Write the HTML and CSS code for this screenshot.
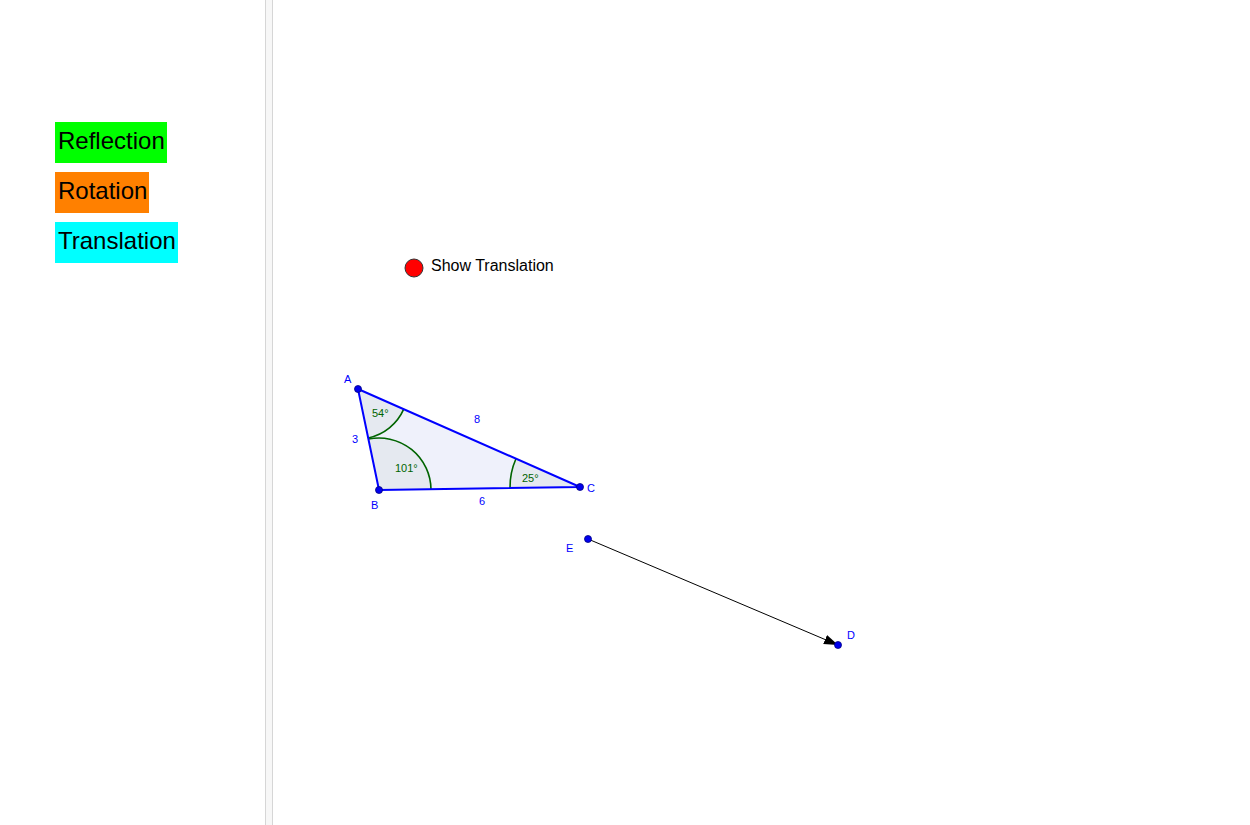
FILE: index.html
```html
<!DOCTYPE html>
<html>
<head>
<meta charset="utf-8">
<link rel="stylesheet" href="styles.css">
</head>
<body>
<div class="app">
  <div class="panel">
    <div class="btn btn-reflect">Reflection</div>
    <div class="btn btn-rotate">Rotation</div>
    <div class="btn btn-translate">Translation</div>
  </div>
  <div class="divider"></div>
  <div class="canvas">
    <svg class="board" width="977" height="825" viewBox="273 0 977 825" xmlns="http://www.w3.org/2000/svg">
      <defs>
        <marker id="arr" viewBox="0 0 10 10" refX="10" refY="5" markerWidth="14" markerHeight="14" markerUnits="userSpaceOnUse" orient="auto">
          <path d="M0,1.5 L10,5 L0,8.5 Z" fill="#000"/>
        </marker>
      </defs>
      <!-- checkbox -->
      <circle cx="414" cy="268" r="9" fill="#ff0000" stroke="#333" stroke-width="1"/>
      <text x="431" y="271" class="cb-label">Show Translation</text>

      <!-- triangle -->
      <polygon points="358,389 379,490 580,487" fill="#eff1fb" stroke="none"/>
      <!-- angle sectors -->
      <path d="M358,389 L368.18,437.95 A50,50 0 0 0 403.74,409.19 Z" fill="#e5e9f0"/>
      <path d="M379,490 L368.41,439.09 A52,52 0 0 1 430.99,489.22 Z" fill="#e5e9f0"/>
      <path d="M580,487 L510.01,488.04 A70,70 0 0 1 515.96,458.73 Z" fill="#e5e9f0"/>
      <path d="M368.18,437.95 A50,50 0 0 0 403.74,409.19" fill="none" stroke="#006400" stroke-width="1.6"/>
      <path d="M368.41,439.09 A52,52 0 0 1 430.99,489.22" fill="none" stroke="#006400" stroke-width="1.6"/>
      <path d="M510.01,488.04 A70,70 0 0 1 515.96,458.73" fill="none" stroke="#006400" stroke-width="1.6"/>
      <polygon points="358,389 379,490 580,487" fill="none" stroke="#0000ff" stroke-width="2" stroke-linejoin="round"/>

      <text x="372" y="417" class="ang">54°</text>
      <text x="395" y="472" class="ang">101°</text>
      <text x="522" y="482" class="ang">25°</text>

      <text x="352" y="443" class="lbl">3</text>
      <text x="474" y="423" class="lbl">8</text>
      <text x="479" y="505" class="lbl">6</text>

      <circle cx="358" cy="389" r="3.5" class="pt"/>
      <circle cx="379" cy="490" r="3.5" class="pt"/>
      <circle cx="580" cy="487" r="3.5" class="pt"/>
      <text x="344" y="383" class="lbl">A</text>
      <text x="371" y="509" class="lbl">B</text>
      <text x="587" y="492" class="lbl">C</text>

      <!-- vector -->
      <line x1="588" y1="539" x2="838" y2="645" stroke="#000" stroke-width="1" marker-end="url(#arr)"/>
      <circle cx="588" cy="539" r="3.5" class="pt"/>
      <circle cx="838" cy="645" r="3.5" class="pt"/>
      <text x="566" y="552" class="lbl">E</text>
      <text x="847" y="639" class="lbl">D</text>
    </svg>
  </div>
</div>
</body>
</html>
```

FILE: styles.css
```css
html, body {
  margin: 0;
  padding: 0;
  background: #ffffff;
  overflow: hidden;
}

.app {
  display: flex;
  width: 1250px;
  height: 825px;
  font-family: "Liberation Sans", Arial, sans-serif;
}

.panel {
  width: 210px;
  padding: 122px 0 0 55px;
  display: flex;
  flex-direction: column;
  align-items: flex-start;
  gap: 9px;
  background: #ffffff;
}

.btn {
  height: 41px;
  line-height: 38px;
  padding: 0 2px 0 3px;
  font-size: 24px;
  color: #000;
  box-sizing: border-box;
}

.btn-reflect { background: #00ff00; }
.btn-rotate { background: #ff8000; }
.btn-translate { background: #00ffff; }

.divider {
  width: 6px;
  height: 825px;
  border-left: 1px solid #d6d6d6;
  border-right: 1px solid #d6d6d6;
  background: #f7f7f7;
}

.canvas {
  flex: 1;
  height: 825px;
  position: relative;
}

.board {
  display: block;
}

.cb-label {
  font-family: "Liberation Sans", Arial, sans-serif;
  font-size: 16px;
  fill: #000;
}

.lbl {
  font-family: "Liberation Sans", Arial, sans-serif;
  font-size: 11px;
  fill: #0000ff;
}

.ang {
  font-family: "Liberation Sans", Arial, sans-serif;
  font-size: 11px;
  fill: #006400;
}

.pt {
  fill: #0000ee;
  stroke: #000080;
  stroke-width: 0.8;
}
```
